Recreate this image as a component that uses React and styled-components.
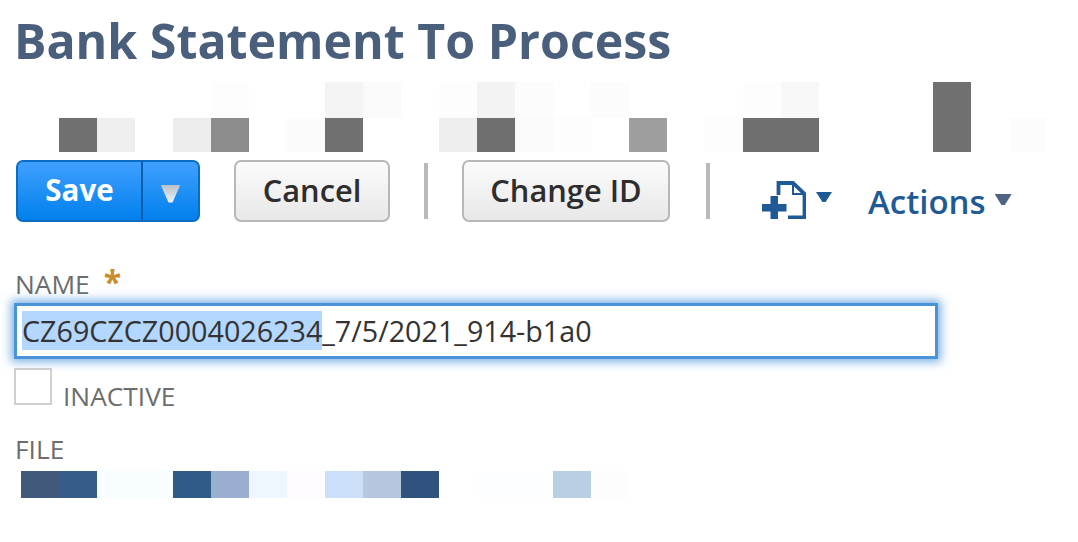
import React from "react";
import styled, { createGlobalStyle } from "styled-components";

const Global = createGlobalStyle`
  html, body { margin: 0; padding: 0; background: #fff; }
  body { font-family: "Open Sans", "Liberation Sans", sans-serif; overflow: hidden; }
`;
const Page = styled.div`
  width: 1078px; height: 542px; display: flex; flex-direction: column; box-sizing: border-box; padding-top: 10px;
`;
const Title = styled.h1`
  margin: 0 0 0 14px; height: 72px; font-size: 48.3px; line-height: 60px; font-weight: 700; color: #4a5f7c; white-space: nowrap;
`;
const Mosaic = styled.div`
  display: grid; grid-template-columns: repeat(28, 38px); grid-template-rows: ${p => p.$rows};
  margin-left: ${p => p.$left}px; margin-top: ${p => p.$top || 0}px;
`;
const Cell = styled.div`
  background: ${p => p.$c || "transparent"};
`;
const Toolbar = styled.div`
  display: flex; align-items: center; height: 62px; margin: 8px 0 0 16px;
`;
const SaveGroup = styled.div`
  display: flex; width: 184px; height: 62px; box-sizing: border-box; border: 2px solid #0b6cc4; border-radius: 7px;
  background: linear-gradient(#40a0ff, #0080ec);
`;
const SaveLabel = styled.div`
  width: 125px; display: flex; align-items: center; justify-content: center; color: #fff; font-size: 29.5px; line-height: 40px; font-weight: 700;
  border-right: 2px solid #0b5fad; padding-bottom: 2px; box-sizing: border-box;
`;
const SaveArrow = styled.div`
  flex: 1; display: flex; align-items: center; justify-content: center; padding-top: 5px; box-sizing: border-box;
`;
const DropTriangle = styled.div`
  width: 20px; height: 18px; clip-path: polygon(0 0, 100% 0, 60% 100%, 40% 100%); background: linear-gradient(#b9c0c9, #eef5fb);
`;
const Button = styled.div`
  width: ${p => p.$w}px; height: 62px; margin-left: ${p => p.$ml}px; box-sizing: border-box; border: 2px solid #b8b8b8; border-radius: 7px;
  background: linear-gradient(#fbfbfb, #e8e8e8); color: #2d2d2d; font-size: 30.8px; font-weight: 600; padding-bottom: 3px;
  display: flex; align-items: center; justify-content: center;
`;
const Sep = styled.div`
  width: 4px; height: 56px; margin-left: ${p => p.$ml}px; background: #b9b9b9;
`;
const NewIcon = styled.svg`
  width: 44px; height: 38px; margin: 18px 0 0 52px; flex: none;
`;
const Caret = styled.div`
  width: ${p => p.$w}px; height: ${p => p.$h}px; margin-left: ${p => p.$ml}px; margin-top: ${p => p.$mt}px; flex: none;
  clip-path: polygon(0 0, 100% 0, 60% 100%, 40% 100%); background: ${p => p.$c};
`;
const Actions = styled.div`
  margin: 22px 0 0 36px; font-size: 33px; line-height: 40px; font-weight: 600; color: #1f5a96;
`;
const LabelRow = styled.div`
  display: flex; margin: ${p => p.$mt}px 0 0 15px; height: ${p => p.$h || 34}px; align-items: flex-start;
`;
const Label = styled.div`
  font-size: 26.3px; line-height: 34px; color: #6d6d6d;
`;
const Star = styled.span`
  margin: -2px 0 0 14px; font-size: 32px; line-height: 34px; font-weight: 700; color: #c98b2c;
`;
const Field = styled.div`
  width: 924px; height: 56px; margin-left: 14px; box-sizing: border-box; border: 3px solid #4a93d6; background: #fff;
  box-shadow: 0 0 9px 3px rgba(70, 145, 220, .7); padding: 5px 5px; font-size: 28.7px; line-height: 40px; color: #333; white-space: nowrap;
`;
const Selected = styled.span`
  background: #b3d7ff;
`;
const CheckRow = styled.div`
  display: flex; margin: 9px 0 0 14px; height: 37px;
`;
const Check = styled.div`
  width: 38px; height: 37px; box-sizing: border-box; border: 2px solid #cfcfcf; background: #fff;
`;
const CheckLabel = styled(Label)`
  margin: 11px 0 0 11px;
`;

const top1 = { 5: "#fdfdfd", 8: "#f4f4f4", 9: "#fafafa", 11: "#fdfdfd", 12: "#f3f3f3", 13: "#fcfcfc", 15: "#fcfcfc", 19: "#fdfdfd", 20: "#f8f8f8", 24: "#707070" };
const top2 = { 1: "#707070", 2: "#efefef", 4: "#ededed", 5: "#8c8c8c", 7: "#fbfbfb", 8: "#707070", 11: "#eeeeee", 12: "#6f6f6f", 13: "#fafafa", 14: "#fdfdfd", 16: "#9e9e9e", 18: "#fdfdfd", 19: "#6f6f6f", 20: "#6f6f6f", 24: "#707070", 26: "#fcfcfc" };
const file = { 0: "#41597a", 1: "#355b88", 2: "#f8fdff", 3: "#f8fdff", 4: "#305a87", 5: "#9aafcf", 6: "#eef7ff", 7: "#fffcff", 8: "#cbe0f8", 9: "#b6c6df", 10: "#30527f", 12: "#fcfeff", 13: "#fcfeff", 14: "#b9cfe4", 15: "#fdfdfd" };
const cols = Array.from({ length: 28 }, (_, i) => i);

export default function App() {
  return (
    <Page>
      <Global />
      <Title>Bank Statement To Process</Title>
      <Mosaic $rows="36px 34px" $left={21}>
        {cols.map(i => <Cell key={"a" + i} $c={top1[i]} />)}
        {cols.map(i => <Cell key={"b" + i} $c={top2[i]} />)}
      </Mosaic>
      <Toolbar>
        <SaveGroup>
          <SaveLabel>Save</SaveLabel>
          <SaveArrow><DropTriangle /></SaveArrow>
        </SaveGroup>
        <Button $w={156} $ml={34}>Cancel</Button>
        <Sep $ml={34} />
        <Button $w={208} $ml={34}>Change ID</Button>
        <Sep $ml={36} />
        <NewIcon viewBox="0 0 44 38" fill="none">
          <path d="M16.5 14V2H31L42.5 13V36.5H26" stroke="#1f5a96" strokeWidth="3.8" />
          <path d="M31 2V13H42" stroke="#1f5a96" strokeWidth="2" />
          <path d="M8.5 15h7.5v8h8.5v7.5H16V38H8.5v-7.5H0V23h8.5z" fill="#1f5a96" />
        </NewIcon>
        <Caret $w={16} $h={10} $ml={10} $mt={12} $c="#1f5a96" />
        <Actions>Actions</Actions>
        <Caret $w={17} $h={11} $ml={9} $mt={17} $c="#4d6484" />
      </Toolbar>
      <LabelRow $mt={45} $h={36}>
        <Label>NAME</Label>
        <Star>*</Star>
      </LabelRow>
      <Field><Selected>CZ69CZCZ0004026234</Selected>_7/5/2021_914-b1a0</Field>
      <CheckRow>
        <Check />
        <CheckLabel>INACTIVE</CheckLabel>
      </CheckRow>
      <LabelRow $mt={27} $h={39}><Label>FILE</Label></LabelRow>
      <Mosaic $rows="27px" $left={21} $top={0}>
        {cols.map(i => <Cell key={"f" + i} $c={file[i]} />)}
      </Mosaic>
    </Page>
  );
}
